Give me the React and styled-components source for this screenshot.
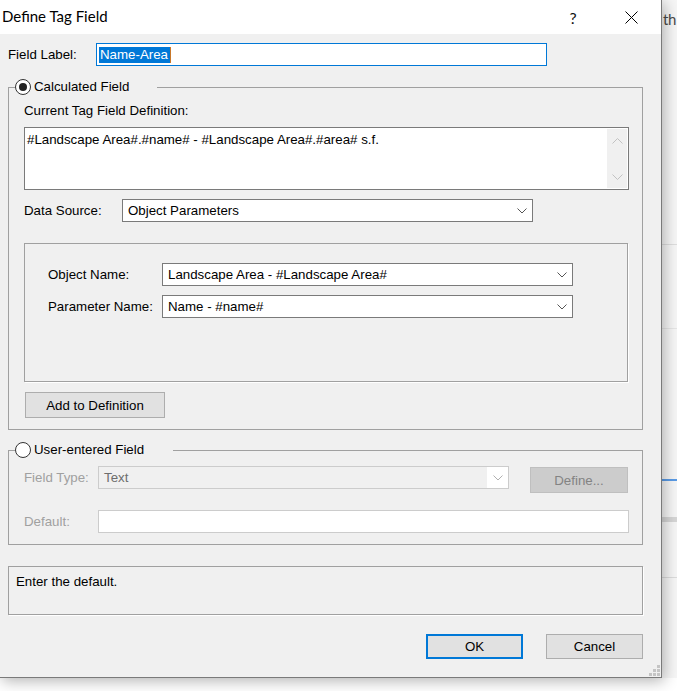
import React from 'react';
import styled, { createGlobalStyle } from 'styled-components';

const GlobalStyle = createGlobalStyle`
  *, *::before, *::after { box-sizing: border-box; }
  html, body { margin: 0; padding: 0; background: #fff; }
  body {
    font-family: "Liberation Sans", Arial, sans-serif;
    font-size: 13.3px;
    color: #000;
  }
`;

const Screen = styled.div`
  display: grid;
  grid-template-columns: 662px 1fr;
  align-items: start;
  width: 677px;
  height: 691px;
  overflow: hidden;
  background: #fff;
`;

/* window behind the dialog, only a sliver shows */
const Backdrop = styled.div`
  display: flex;
  flex-direction: column;
  height: 678px;
  background: #f6f6f6;
  overflow: hidden;
`;

const BackdropText = styled.div`
  height: 40px;
  padding: 10px 0 0 1px;
  font-family: Lato, "Liberation Sans", sans-serif;
  font-size: 15px;
  letter-spacing: -0.5px;
  color: #4a4a4a;
  white-space: nowrap;
`;

const BackdropRule = styled.div`
  flex: none;
  margin-top: ${p => p.$gap}px;
  height: ${p => p.$h || 1}px;
  background: ${p => p.$color};
`;

const Dialog = styled.div`
  position: relative;
  z-index: 1;
  display: flex;
  flex-direction: column;
  width: 662px;
  height: 678px;
  background: #f0f0f0;
  border-right: 1px solid #7a7a7a;
  border-bottom: 1px solid #7a7a7a;
  box-shadow: 2px 3px 14px rgba(0, 0, 0, 0.3);
`;

const TitleBar = styled.div`
  display: flex;
  align-items: center;
  height: 34px;
  flex: none;
  background: #fff;
`;

const Title = styled.div`
  flex: 1;
  padding: 0 0 2px 2px;
  font-family: Lato, "Liberation Sans", sans-serif;
  font-size: 15px;
  color: #000;
`;

const CaptionButton = styled.div`
  display: flex;
  align-items: center;
  justify-content: center;
  width: 46px;
  height: 34px;
  margin-right: ${p => p.$mr}px;
  font-family: Lato, "Liberation Sans", sans-serif;
  font-size: 16px;
  color: #111;
`;

const Body = styled.div`
  flex: 1;
  display: flex;
  flex-direction: column;
  padding: 9px 18px 0 8px;
`;

const Row = styled.div`
  display: flex;
  align-items: ${p => p.$align || 'center'};
  margin-top: ${p => p.$mt || 0}px;
`;

const Label = styled.span`
  flex: none;
  width: ${p => p.$w}px;
  line-height: 16px;
  color: ${p => (p.$disabled ? '#a0a0a0' : '#000')};
  white-space: nowrap;
`;

const TextInput = styled.div`
  display: flex;
  align-items: center;
  width: ${p => p.$w}px;
  height: 23px;
  padding-left: 2px;
  background: #fff;
  border: 1px solid ${p => (p.$focused ? '#0078d7' : p.$disabled ? '#cccccc' : '#7a7a7a')};
`;

const Selected = styled.span`
  padding: 0 2px 0 1px;
  line-height: 16px;
  background: #0078d7;
  color: #fff;
`;

const Caret = styled.span`
  width: 1px;
  height: 16px;
  background: #c8782a;
`;

const Select = styled.div`
  display: flex;
  align-items: center;
  width: ${p => p.$w}px;
  height: 23px;
  padding-left: 5px;
  background: ${p => (p.$disabled ? '#f0f0f0' : '#fff')};
  border: 1px solid ${p => (p.$disabled ? '#cccccc' : '#7a7a7a')};
  color: ${p => (p.$disabled ? '#6d6d6d' : '#000')};
`;

const SelectValue = styled.span`
  flex: 1;
  line-height: 16px;
  white-space: nowrap;
`;

const DropButton = styled.span`
  display: flex;
  align-items: center;
  justify-content: center;
  width: 21px;
  align-self: stretch;
  background: ${p => (p.$disabled ? '#fff' : 'transparent')};
`;

const Group = styled.fieldset`
  margin: ${p => p.$mt}px 0 0;
  padding: 0 13px ${p => p.$pb}px 6px;
  min-width: 0;
  border: 1px solid #a0a0a0;
`;

const Legend = styled.legend`
  display: flex;
  align-items: center;
  gap: 3px;
  width: ${p => p.$w}px;
  height: 16px;
  padding: 0;
  line-height: 16px;
`;

const Radio = styled.span`
  display: flex;
  align-items: center;
  justify-content: center;
  flex: none;
  width: 16px;
  height: 16px;
  border-radius: 50%;
  border: 1px solid #333;
  background: #fff;

  &::after {
    content: '';
    display: ${p => (p.$checked ? 'block' : 'none')};
    width: 8px;
    height: 8px;
    border-radius: 50%;
    background: #222;
  }
`;

const GroupContent = styled.div`
  display: flex;
  flex-direction: column;
  padding: 8px 0 0 9px;
`;

const SectionLabel = styled.div`
  line-height: 16px;
`;

const MultiLine = styled.div`
  display: flex;
  margin-top: 8px;
  height: 63px;
  background: #fff;
  border: 1px solid #7a7a7a;
`;

const MultiLineText = styled.div`
  flex: 1;
  padding: 4px 0 0 2px;
  line-height: 16px;
  white-space: nowrap;
`;

const ScrollBar = styled.div`
  display: flex;
  flex-direction: column;
  justify-content: space-between;
  align-items: center;
  width: 20px;
  margin: 1px 1px 1px 0;
  padding: 9px 0 8px;
  background: #f0f0f0;
`;

const Panel = styled.div`
  display: flex;
  flex-direction: column;
  gap: 9px;
  margin-top: 21px;
  width: 604px;
  height: 139px;
  padding: 19px 0 0 23px;
  border: 1px solid #a0a0a0;
  box-shadow: 1px 1px 0 #fff;
`;

const Button = styled.button`
  flex: none;
  width: ${p => p.$w}px;
  height: ${p => p.$h || 25}px;
  margin: ${p => p.$m || 0};
  padding: 0;
  font-family: "Liberation Sans", Arial, sans-serif;
  font-size: 13.3px;
  color: ${p => (p.$disabled ? '#838383' : '#000')};
  background: ${p => (p.$disabled ? '#cccccc' : '#e1e1e1')};
  border: ${p => (p.$default ? '2px solid #0078d7' : `1px solid ${p.$disabled ? '#bfbfbf' : '#adadad'}`)};
  border-radius: 0;
`;

const StatusBox = styled.div`
  margin-top: 21px;
  height: 49px;
  padding: 7px 0 0 7px;
  line-height: 16px;
  border: 1px solid #a0a0a0;
  box-shadow: 1px 1px 0 #fff;
`;

const ButtonBar = styled.div`
  display: flex;
  justify-content: flex-end;
  gap: 23px;
  margin-top: 19px;
`;

const Grip = styled.svg`
  position: absolute;
  right: 1px;
  bottom: 1px;
`;

const Chevron = ({ color = '#555' }) => (
  <svg width="10" height="6" viewBox="0 0 10 6">
    <polyline points="0.5,0.5 5,5 9.5,0.5" fill="none" stroke={color} strokeWidth="1" />
  </svg>
);

const ChevronUp = () => (
  <svg width="11" height="6" viewBox="0 0 11 6">
    <polyline points="0.5,5.5 5.5,0.5 10.5,5.5" fill="none" stroke="#c2c2c2" strokeWidth="1" />
  </svg>
);

const ChevronDown = () => (
  <svg width="11" height="6" viewBox="0 0 11 6">
    <polyline points="0.5,0.5 5.5,5.5 10.5,0.5" fill="none" stroke="#c2c2c2" strokeWidth="1" />
  </svg>
);

const CloseGlyph = () => (
  <svg width="13" height="13" viewBox="0 0 13 13">
    <path d="M0.5 0.5 L12.5 12.5 M12.5 0.5 L0.5 12.5" stroke="#000" strokeWidth="1" fill="none" />
  </svg>
);

function DropDown({ width, value, disabled }) {
  return (
    <Select $w={width} $disabled={disabled}>
      <SelectValue>{value}</SelectValue>
      <DropButton $disabled={disabled}>
        <Chevron color={disabled ? '#b0b0b0' : '#555'} />
      </DropButton>
    </Select>
  );
}

export default function App() {
  return (
    <Screen>
      <GlobalStyle />
      <Dialog>
        <TitleBar>
          <Title>Define Tag Field</Title>
          <CaptionButton $mr={12}>?</CaptionButton>
          <CaptionButton $mr={7}>
            <CloseGlyph />
          </CaptionButton>
        </TitleBar>

        <Body>
          <Row>
            <Label $w={88}>Field Label:</Label>
            <TextInput $w={451} $focused>
              <Selected>Name-Area</Selected>
              <Caret />
            </TextInput>
          </Row>

          <Group $mt={13} $pb={11}>
            <Legend $w={142}>
              <Radio $checked />
              Calculated Field
            </Legend>
            <GroupContent>
              <SectionLabel>Current Tag Field Definition:</SectionLabel>
              <MultiLine>
                <MultiLineText>#Landscape Area#.#name# - #Landscape Area#.#area# s.f.</MultiLineText>
                <ScrollBar>
                  <ChevronUp />
                  <ChevronDown />
                </ScrollBar>
              </MultiLine>

              <Row $mt={9}>
                <Label $w={98}>Data Source:</Label>
                <DropDown width={411} value="Object Parameters" />
              </Row>

              <Panel>
                <Row>
                  <Label $w={114}>Object Name:</Label>
                  <DropDown width={411} value="Landscape Area - #Landscape Area#" />
                </Row>
                <Row>
                  <Label $w={114}>Parameter Name:</Label>
                  <DropDown width={411} value="Name - #name#" />
                </Row>
              </Panel>

              <Button $w={140} $h={26} $m="10px 0 0 1px">Add to Definition</Button>
            </GroupContent>
          </Group>

          <Group $mt={12} $pb={11}>
            <Legend $w={158}>
              <Radio />
              User-entered Field
            </Legend>
            <GroupContent>
              <Row $align="flex-start">
                <Row>
                  <Label $w={74} $disabled>Field Type:</Label>
                  <DropDown width={411} value="Text" disabled />
                </Row>
                <Button $w={98} $h={26} $m="1px 0 0 21px" $disabled>Define...</Button>
              </Row>
              <Row $mt={17}>
                <Label $w={74} $disabled>Default:</Label>
                <TextInput $w={531} $disabled />
              </Row>
            </GroupContent>
          </Group>

          <StatusBox>Enter the default.</StatusBox>

          <ButtonBar>
            <Button $w={97} $default>OK</Button>
            <Button $w={97}>Cancel</Button>
          </ButtonBar>
        </Body>

        <Grip width="11" height="11" viewBox="0 0 11 11">
          <g fill="#c4c4c4">
            <rect x="8" y="0" width="3" height="3" />
            <rect x="4" y="4" width="3" height="3" />
            <rect x="8" y="4" width="3" height="3" />
            <rect x="0" y="8" width="3" height="3" />
            <rect x="4" y="8" width="3" height="3" />
            <rect x="8" y="8" width="3" height="3" />
          </g>
        </Grip>
      </Dialog>

      <Backdrop>
        <BackdropText>th</BackdropText>
        <BackdropRule $gap={204} $color="#dedede" />
        <BackdropRule $gap={83} $color="#e6e6e6" />
        <BackdropRule $gap={150} $h={2} $color="#5a9be6" />
        <BackdropRule $gap={36} $h={5} $color="#d6d6d6" />
        <BackdropRule $gap={55} $color="#dcdcdc" />
      </Backdrop>
    </Screen>
  );
}
